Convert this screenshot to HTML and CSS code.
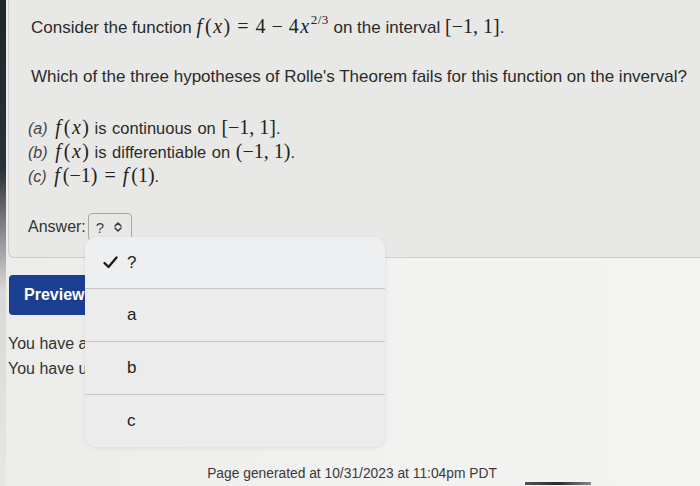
FILE: index.html
```html
<!DOCTYPE html>
<html>
<head>
<meta charset="utf-8">
<link rel="stylesheet" href="styles.css">
</head>
<body>
<div class="screen">
  <div class="bezel"></div>
  <div class="page">
    <div class="qbox">
      <p class="line first">Consider the function <span class="math"><i class="f">f</i>(<i class="x">x</i>)<span class="rel">=</span>4<span class="bin">−</span>4<i class="x">x</i><sup>2/3</sup></span> on the interval <span class="math">[−1,<span class="th"></span>1]</span>.</p>
      <p class="line second">Which of the three hypotheses of Rolle's Theorem fails for this function on the inverval?</p>
      <div class="options">
        <div class="opt"><span class="lbl">(a)</span> <span class="math"><i class="f">f</i>(<i class="x">x</i>)</span> is continuous on <span class="math">[−1,<span class="th"></span>1]</span>.</div>
        <div class="opt"><span class="lbl">(b)</span> <span class="math"><i class="f">f</i>(<i class="x">x</i>)</span> is differentiable on <span class="math">(−1,<span class="th"></span>1)</span>.</div>
        <div class="opt"><span class="lbl">(c)</span> <span class="math"><i class="f">f</i>(−1)<span class="rel">=</span><i class="f">f</i>(1)</span>.</div>
      </div>
      <div class="answer">
        <span class="alabel">Answer:</span>
        <span class="select">?
          <svg class="chev" width="10" height="12" viewBox="0 0 10 12"><path d="M2 5 L5 2 L8 5 M2 7 L5 10 L8 7" fill="none" stroke="#333" stroke-width="1.5" stroke-linecap="round" stroke-linejoin="round"/></svg>
        </span>
      </div>
    </div>
    <button class="preview">Preview</button>
    <div class="notes">
      <div>You have attempted this problem 0 times.</div>
      <div>You have unlimited attempts remaining.</div>
    </div>
    <div class="footer">Page generated at 10/31/2023 at 11:04pm PDT</div>
    <div class="edgebar"></div>

    <div class="popup">
      <div class="prow sel"><svg class="check" width="15" height="13" viewBox="0 0 15 13"><path d="M1.5 7 L5.5 11 L13.5 1.5" fill="none" stroke="#1a1a1a" stroke-width="2.3" stroke-linecap="round" stroke-linejoin="round"/></svg><span>?</span></div>
      <div class="prow">a</div>
      <div class="prow">b</div>
      <div class="prow">c</div>
    </div>
  </div>
</div>
</body>
</html>
```

FILE: styles.css
```css
html, body {
  margin: 0;
  padding: 0;
}
body {
  width: 700px;
  height: 486px;
  overflow: hidden;
  background: #efefed;
  font-family: "Liberation Sans", Arial, sans-serif;
  color: #2b2b2b;
}
.screen {
  display: flex;
  height: 486px;
}
.bezel {
  width: 6px;
  flex: none;
  background: linear-gradient(to bottom, #20242b 0%, #2c3038 35%, #8a8c90 48%, #d9d9d7 60%, #e6e6e4 100%);
}
.page {
  position: relative;
  flex: 1;
  min-width: 0;
  background: linear-gradient(to right, #ececea, #f2f2f0 60%, #f4f4f2);
}
.qbox {
  margin-left: 2px;
  background: #e8e8e6;
  border-left: 1px solid #cdcdcb;
  border-bottom: 1px solid #cdcdcb;
  border-bottom-left-radius: 6px;
  padding: 16px 0 16px 19px;
}
.line {
  margin: 0;
  font-size: 17px;
  line-height: 24px;
  height: 24px;
  padding-left: 3px;
  white-space: nowrap;
}
.second {
  margin-top: 25px;
}
.math {
  font-family: "Liberation Serif", "Times New Roman", serif;
  font-size: 20px;
  line-height: 1;
  color: #222;
}
.math i {
  font-style: italic;
}
.math .f {
  padding-right: 3px;
}
.math .x {
  padding: 0 1.5px;
}
.math .rel {
  margin: 0 7px;
}
.math .bin {
  margin: 0 6px;
}
.math .th {
  display: inline-block;
  width: 5px;
}
.math sup {
  font-size: 13px;
  line-height: 0;
  vertical-align: 9px;
  letter-spacing: 0.5px;
}
.options {
  margin-top: 27px;
  padding-left: 0;
}
.opt {
  font-size: 16.5px;
  line-height: 24px;
  height: 24px;
  white-space: nowrap;
  word-spacing: 1px;
}
.lbl {
  font-style: italic;
  font-size: 16px;
  color: #444;
  margin-right: 2px;
}
.answer {
  margin-top: 25px;
  display: flex;
  align-items: center;
  height: 28px;
  font-size: 16px;
  color: #333;
}
.alabel {
  margin-right: 2px;
}
.select {
  display: inline-flex;
  align-items: center;
  gap: 9px;
  height: 28px;
  padding: 0 8px 0 7px;
  border: 1px solid #a8a8a6;
  border-radius: 4px;
  font-size: 15px;
  color: #444;
  box-sizing: border-box;
}
.chev {
  display: block;
}
.preview {
  display: block;
  margin: 17px 0 0 3px;
  width: 90px;
  height: 40px;
  border: none;
  border-radius: 4px;
  background: #1c3f92;
  color: #fff;
  font-family: "Liberation Sans", Arial, sans-serif;
  font-size: 16px;
  font-weight: bold;
  text-align: left;
  padding: 0 0 0 15px;
}
.notes {
  margin-top: 16px;
  margin-left: 2px;
  font-size: 16px;
  line-height: 25px;
  color: #333;
  white-space: nowrap;
}
.footer {
  margin-top: 85px;
  text-align: center;
  font-size: 13.8px;
  line-height: 16px;
  height: 16px;
  color: #3a3a3a;
  padding-right: 2px;
}
.edgebar {
  margin-left: 519px;
  width: 66px;
  height: 3px;
  background: linear-gradient(to right, #555, #2a2a2a 50%, #888);
}
.popup {
  position: absolute;
  left: 79px;
  top: 237px;
  width: 300px;
  height: 210px;
  border-radius: 12px;
  background: #ececec;
  overflow: hidden;
  box-shadow: 0 1px 4px rgba(0, 0, 0, 0.08);
}
.prow {
  display: flex;
  align-items: center;
  height: 53px;
  padding-left: 42px;
  font-size: 17px;
  color: #222;
  border-top: 1px solid #c8c8c8;
  box-sizing: border-box;
}
.prow.sel {
  height: 51px;
  border-top: none;
  background: #eeeff1;
  padding-left: 18px;
  gap: 9px;
}
.check {
  display: block;
}
```
